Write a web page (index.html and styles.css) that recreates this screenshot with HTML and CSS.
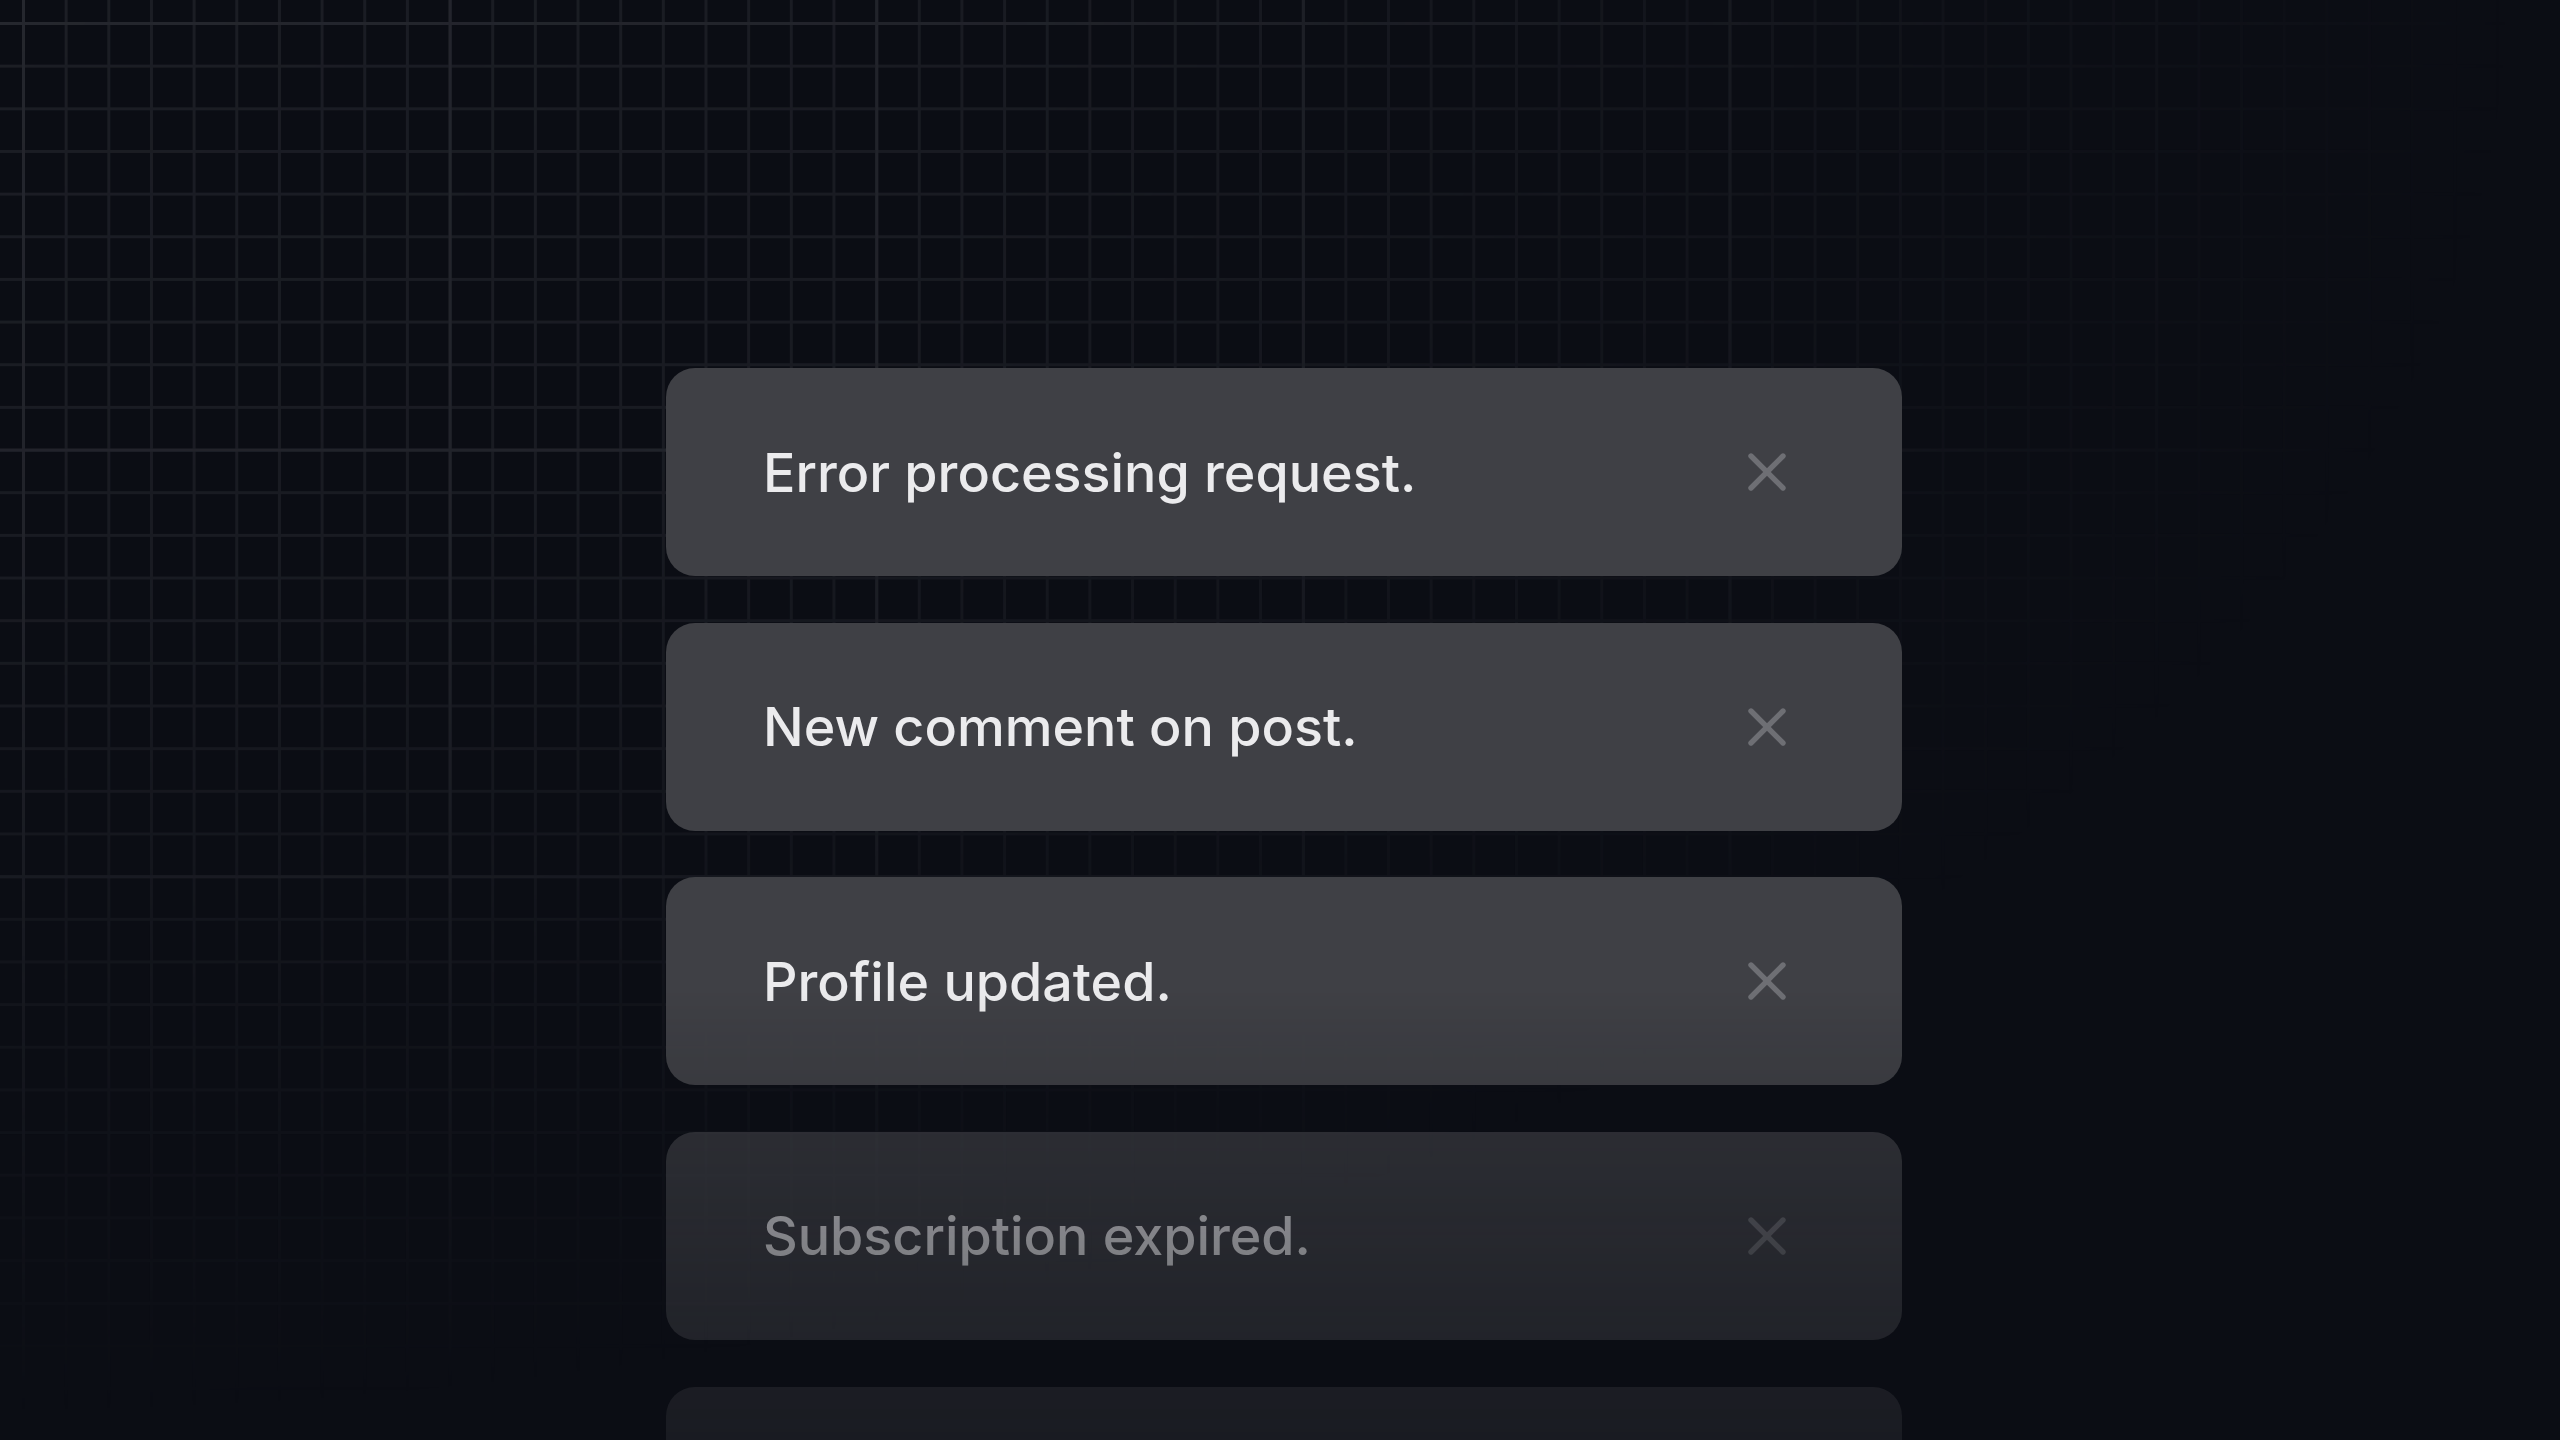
FILE: index.html
```html
<!DOCTYPE html>
<html lang="en">
<head>
<meta charset="utf-8">
<title>Notifications</title>
<link rel="stylesheet" href="styles.css">
</head>
<body>
<div class="grid-bg"></div>
<main class="stage">
  <ul class="stack">
    <li class="toast">
      <span class="toast-text">Error processing request.</span>
      <button class="toast-close" aria-label="Dismiss">
        <svg viewBox="0 0 24 24" width="64" height="64" fill="none" stroke="currentColor" stroke-width="2" stroke-linecap="round" stroke-linejoin="round"><path d="M18 6 6 18"/><path d="m6 6 12 12"/></svg>
      </button>
    </li>
    <li class="toast">
      <span class="toast-text">New comment on post.</span>
      <button class="toast-close" aria-label="Dismiss">
        <svg viewBox="0 0 24 24" width="64" height="64" fill="none" stroke="currentColor" stroke-width="2" stroke-linecap="round" stroke-linejoin="round"><path d="M18 6 6 18"/><path d="m6 6 12 12"/></svg>
      </button>
    </li>
    <li class="toast">
      <span class="toast-text">Profile updated.</span>
      <button class="toast-close" aria-label="Dismiss">
        <svg viewBox="0 0 24 24" width="64" height="64" fill="none" stroke="currentColor" stroke-width="2" stroke-linecap="round" stroke-linejoin="round"><path d="M18 6 6 18"/><path d="m6 6 12 12"/></svg>
      </button>
    </li>
    <li class="toast toast-fade1">
      <span class="toast-text">Subscription expired.</span>
      <button class="toast-close" aria-label="Dismiss">
        <svg viewBox="0 0 24 24" width="64" height="64" fill="none" stroke="currentColor" stroke-width="2" stroke-linecap="round" stroke-linejoin="round"><path d="M18 6 6 18"/><path d="m6 6 12 12"/></svg>
      </button>
    </li>
    <li class="toast toast-fade2" aria-hidden="true"></li>
  </ul>
</main>
</body>
</html>
```
FILE: styles.css
```css
html, body {
  margin: 0;
  padding: 0;
  height: 1440px;
  overflow: hidden;
}

body {
  background: #0b0d14;
  font-family: Inter, "Noto Sans", "Liberation Sans", sans-serif;
  position: relative;
}

.grid-bg {
  position: absolute;
  inset: 0;
  z-index: 0;
  background-image:
    linear-gradient(to right, #25272e 0, #25272e 2.67px, transparent 2.67px),
    linear-gradient(to bottom, #25272e 0, #25272e 2.67px, transparent 2.67px),
    linear-gradient(to right, #1c1e25 0, #1c1e25 2.67px, transparent 2.67px),
    linear-gradient(to bottom, #1c1e25 0, #1c1e25 2.67px, transparent 2.67px);
  background-size:
    426.67px 426.67px,
    426.67px 426.67px,
    42.667px 42.667px,
    42.667px 42.667px;
  background-position:
    22px 22px,
    22px 22px,
    22px 22px,
    22px 22px;
  -webkit-mask-image: radial-gradient(ellipse 100% 100% at 0 0, #000 0%, rgba(0,0,0,.85) 40%, rgba(0,0,0,.35) 75%, transparent 98%);
  mask-image: radial-gradient(ellipse 100% 100% at 0 0, #000 0%, rgba(0,0,0,.85) 40%, rgba(0,0,0,.35) 75%, transparent 98%);
}

.stage {
  position: relative;
  z-index: 1;
  height: 1440px;
  box-sizing: border-box;
  overflow: hidden;
  padding-top: 368px;
  padding-left: 666px;
}

.stack {
  list-style: none;
  margin: 0;
  padding: 0;
  width: 1236px;
  display: flex;
  flex-direction: column;
  gap: 46.67px;
  -webkit-mask-image: linear-gradient(to bottom, #000 0, #000 620px, rgba(0,0,0,.45) 1072px, rgba(0,0,0,.3) 1227px);
  mask-image: linear-gradient(to bottom, #000 0, #000 620px, rgba(0,0,0,.45) 1072px, rgba(0,0,0,.3) 1227px);
}

.toast {
  height: 208px;
  flex: none;
  box-sizing: border-box;
  background: #3f4045;
  border-radius: 29px;
  display: flex;
  align-items: center;
  justify-content: space-between;
  padding: 0 103px 0 97px;
}

.toast-fade1 { opacity: .77; }
.toast-fade2 { opacity: .63; }

.toast-text {
  color: #ebebed;
  font-size: 53.8px;
  font-weight: 500;
  letter-spacing: 0;
  white-space: nowrap;
}

.toast-close {
  background: none;
  border: 0;
  padding: 0;
  margin: 0;
  width: 64px;
  height: 64px;
  color: #6e6f74;
  display: flex;
  align-items: center;
  justify-content: center;
}

.toast-close svg {
  display: block;
}
```
